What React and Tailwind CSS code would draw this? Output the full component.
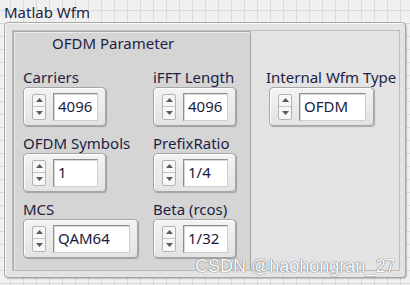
const labelCls = "h-[20px] text-[15px] leading-[20px] text-[#1e1e44] whitespace-nowrap";

function Arrow({ up }) {
  return (
    <svg width="7" height="4" viewBox="0 0 7 4">
      <polygon points={up ? "0,4 7,4 3.5,0" : "0,0 7,0 3.5,4"} fill="#5a5a5a" />
    </svg>
  );
}

function Spin({ label, value, width }) {
  return (
    <div className="flex flex-col">
      {label && <div className={labelCls}>{label}</div>}
      <div
        className={`flex h-[39px] items-center rounded-[4px] border border-[#a5a5a5] bg-[linear-gradient(#f3f3f3,#e3e3e3)] pl-[8px] pr-[7px] shadow-[inset_1px_1px_0_#ffffff,1px_1px_1px_rgba(0,0,0,0.25)] ${width}`}
      >
        <div className="flex h-[26px] w-[14px] flex-col rounded-[2px] border border-[#b3b3b3] bg-[#f7f7f7]">
          <div className="flex flex-1 items-center justify-center border-b border-[#c4c4c4]">
            <Arrow up />
          </div>
          <div className="flex flex-1 items-center justify-center">
            <Arrow />
          </div>
        </div>
        <div className="ml-[7px] flex h-[28px] flex-1 items-center border border-[#8e8e8e] border-b-[#cfcfcf] border-r-[#cfcfcf] bg-white pl-[4px] text-[15px] text-[#1a1a3c] shadow-[inset_1px_1px_0_#d8d8d8]">
          {value}
        </div>
      </div>
    </div>
  );
}

export default function App() {
  return (
    <div className="relative h-[285px] w-[410px] overflow-hidden bg-[#f0f0f0] bg-[linear-gradient(to_right,#dadada_1px,transparent_1px),linear-gradient(to_bottom,#dadada_1px,transparent_1px)] bg-[size:13px_13px] bg-[position:-3px_-3px] font-['Noto_Sans',sans-serif]">
      <div className="h-[22px] pl-[4px] pt-[2px]">
        <div className={labelCls}>Matlab Wfm</div>
      </div>
      <div className="ml-[4px] h-[256px] w-[402px] rounded-[4px] border border-[#a9a9a9] bg-[#e3e3e3] pb-[6px] pl-[7px] pr-[5px] pt-[7px] shadow-[inset_1px_1px_0_#f7f7f7,1px_1px_1px_rgba(0,0,0,0.2)]">
        <div className="flex h-full border border-[#bdbdbd]">
          <div className="w-[238px] border-r border-[#a3a3a3] bg-[#d5d5d5] pt-[2px] shadow-[inset_1px_1px_0_#a8a8a8,inset_2px_2px_0_#ececec]">
            <div className="pl-[39px]">
              <div className={labelCls}>OFDM Parameter</div>
            </div>
            <div className="mt-[14px] flex pl-[10px]">
              <div className="flex w-[130px] flex-col gap-[7px]">
                <Spin label="Carriers" value="4096" width="w-[83px]" />
                <Spin label="OFDM Symbols" value="1" width="w-[83px]" />
                <Spin label="MCS" value="QAM64" width="w-[115px]" />
              </div>
              <div className="flex flex-col gap-[7px]">
                <Spin label="iFFT Length" value="4096" width="w-[83px]" />
                <Spin label="PrefixRatio" value="1/4" width="w-[83px]" />
                <Spin label="Beta (rcos)" value="1/32" width="w-[83px]" />
              </div>
            </div>
          </div>
          <div className="flex-1 bg-[#e3e3e3] pl-[15px] pt-[36px]">
            <div className={labelCls}>Internal Wfm Type</div>
            <div className="ml-[3px]">
              <Spin value="OFDM" width="w-[105px]" />
            </div>
          </div>
        </div>
      </div>
      <div className="pointer-events-none absolute left-[195px] top-[255px] font-['Liberation_Sans',sans-serif] text-[18px] leading-[22px] text-white [text-shadow:0_0_1px_#555,0_0_1px_#777]">
        CSDN @haohongran_27
      </div>
    </div>
  );
}
